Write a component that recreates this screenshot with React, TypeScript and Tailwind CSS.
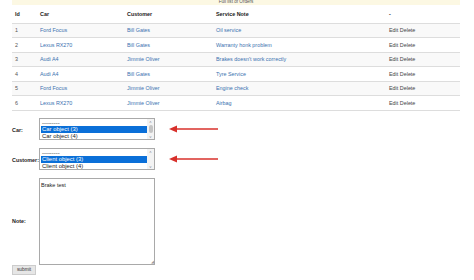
import React from 'react';

const orders = [
  { id: 1, car: 'Ford Focus', customer: 'Bill Gates', note: 'Oil service' },
  { id: 2, car: 'Lexus RX270', customer: 'Bill Gates', note: 'Warranty honk problem' },
  { id: 3, car: 'Audi A4', customer: 'Jimmie Oliver', note: "Brakes doesn't work correctly" },
  { id: 4, car: 'Audi A4', customer: 'Bill Gates', note: 'Tyre Service' },
  { id: 5, car: 'Ford Focus', customer: 'Jimmie Oliver', note: 'Engine check' },
  { id: 6, car: 'Lexus RX270', customer: 'Jimmie Oliver', note: 'Airbag' },
];

function ListBox({ options, selected, scrollThumb }: { options: string[]; selected: number; scrollThumb?: boolean }) {
  return (
    <div className="relative h-[22px] w-[116px] border border-[#a9a9a9] bg-white pl-px pt-px text-[5.9px]">
      <div className="mr-[7px] flex flex-col">
        {options.map((o, i) => (
          <div
            key={i}
            className={`h-[6.5px] pl-px leading-[6.5px] ${i === selected ? 'bg-[#0a6fd8] text-white' : 'text-[#222]'}`}
          >
            {o}
          </div>
        ))}
      </div>
      {/* scrollbar */}
      <div className="absolute right-0 top-0 bottom-0 flex w-[7px] flex-col items-center justify-between bg-[#f3f3f3] text-[4px] leading-[5px] text-[#888]">
        <span>˄</span>
        {scrollThumb && <div className="h-[8px] w-[4px] rounded-sm bg-[#c4c4c4]" />}
        <span>˅</span>
      </div>
    </div>
  );
}

function Arrow() {
  return (
    <svg width="50" height="8" viewBox="0 0 50 8" className="absolute left-[157px]">
      <line x1="5" y1="4" x2="49" y2="4" stroke="#d8302b" strokeWidth="1.6" />
      <polygon points="0,4 8,0.5 8,7.5" fill="#d8302b" />
    </svg>
  );
}

export default function App() {
  return (
    <div className="h-[280px] w-[474px] bg-white text-[5.4px] text-[#333]" style={{ fontFamily: '"Liberation Sans", Arial, sans-serif' }}>
      <div className="ml-[12px] w-[448px]">
        <div className="h-[5px] bg-[#fcf8e3] text-center text-[4.6px] leading-[4px] text-[#555]">Full list of Orders</div>
        <table className="w-full border-collapse">
          <thead>
            <tr className="h-[18px] border-b border-[#ddd] text-left font-bold text-[#222]">
              <th className="w-[25px] pl-[3px]">Id</th>
              <th className="w-[87px] pl-[3px]">Car</th>
              <th className="w-[89px] pl-[3px]">Customer</th>
              <th className="w-[173px] pl-[3px]">Service Note</th>
              <th className="pl-[3px]">-</th>
            </tr>
          </thead>
          <tbody>
            {orders.map((o, i) => (
              <tr key={o.id} className={`h-[14.5px] border-b border-[#ddd] ${i % 2 === 0 ? 'bg-[#f9f9f9]' : 'bg-white'}`}>
                <td className="pl-[3px] text-[#555]">{o.id}</td>
                <td className="pl-[3px] text-[#3a72b0]">{o.car}</td>
                <td className="pl-[3px] text-[#3a72b0]">{o.customer}</td>
                <td className="pl-[3px] text-[#3a72b0]">{o.note}</td>
                <td className="pl-[3px] text-[#444]">Edit Delete</td>
              </tr>
            ))}
          </tbody>
        </table>
      </div>

      <div className="relative ml-[12px] mt-[7px] flex flex-col">
        <div className="relative flex items-center">
          <label className="w-[27px] pt-[4px] font-bold text-[#222]">Car:</label>
          <ListBox options={['---------', 'Car object (3)', 'Car object (4)']} selected={1} scrollThumb />
          <Arrow />
        </div>
        <div className="relative mt-[8px] flex items-center">
          <label className="w-[27px] whitespace-nowrap pt-[4px] font-bold text-[#222]">Customer:</label>
          <div className="relative">
            <ListBox options={['---------', 'Client object (3)', 'Client object (4)']} selected={1} />
          </div>
          <Arrow />
        </div>
        <div className="mt-[8px] flex items-center">
          <label className="w-[27px] font-bold text-[#222]">Note:</label>
          <div className="relative h-[87px] w-[116px] border border-[#a9a9a9] bg-white px-px pt-[2px] text-[5.5px] text-[#222]">
            Brake test
            <span className="absolute bottom-0 right-0 text-[4px] leading-[4px] text-[#999]">◢</span>
          </div>
        </div>
        <div className="flex">
          <button className="h-[10px] w-[24px] border border-[#ccc] bg-[#e6e6e6] text-[4.8px] leading-[8px] text-[#333]">submit</button>
        </div>
      </div>
    </div>
  );
}
